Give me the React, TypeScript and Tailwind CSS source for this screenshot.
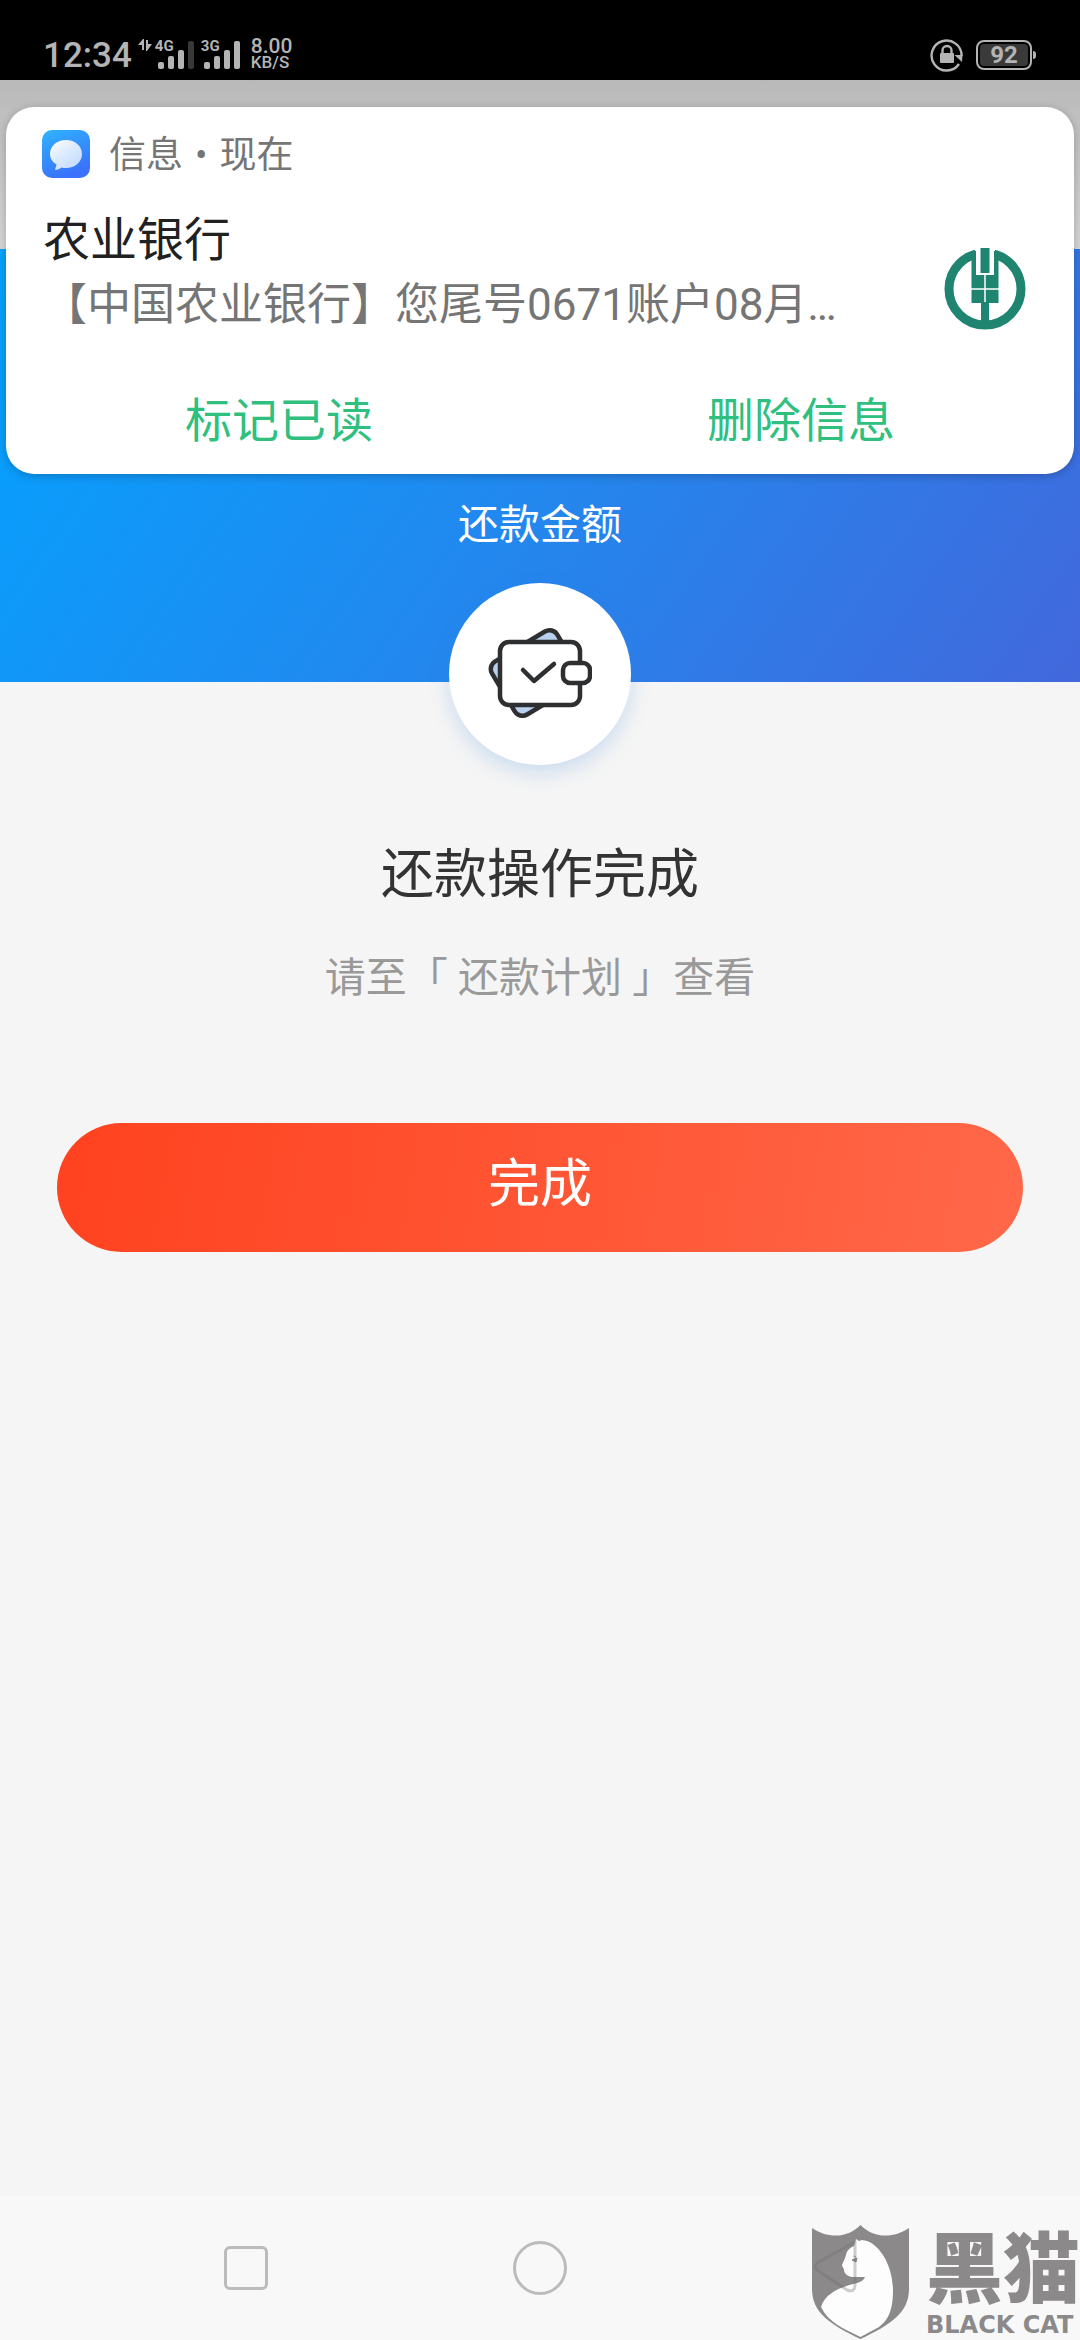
function SignalBars({ label, dim }: { label: string; dim?: boolean }) {
  return (
    <span className="relative block h-8 w-[38px]">
      <svg viewBox="0 0 38 32" className="block h-full w-full" fill="#b4b4b4">
        <rect x="1" y="25" width="6" height="7" rx="2" />
        <rect x="11" y="19" width="6" height="13" rx="2" />
        <rect x="21" y="13" width="6" height="19" rx="2" />
        <rect x="31" y="4" width="6" height="28" rx="2" fill={dim ? "#383838" : "#b4b4b4"} />
      </svg>
      <span className="absolute top-0 -left-0.5 text-[15px] leading-[18px] font-bold">{label}</span>
    </span>
  );
}

function StatusBar() {
  return (
    <header className="flex h-20 shrink-0 items-end justify-between bg-black pr-11 pl-[43px] text-[#b4b4b4]">
      <div className="flex items-end pb-[11px]">
        <span className="text-[35px] leading-[26px] font-medium">12:34</span>
        <svg viewBox="0 0 14 12" className="mb-[18px] ml-1.5 h-3 w-3.5" fill="#b4b4b4">
          <path d="M0 6 5 0h1v11H4V6zM8 1h2v4h4l-5 7H8z" />
        </svg>
        <span className="ml-[5px]"><SignalBars label="4G" dim /></span>
        <span className="ml-2"><SignalBars label="3G" /></span>
        <span className="ml-2.5 flex flex-col">
          <span className="text-[21px] leading-[18px] font-medium">8.00</span>
          <span className="text-[17px] leading-[14px] font-medium">KB/S</span>
        </span>
      </div>
      <div className="flex items-center gap-3 pb-2">
        <svg viewBox="0 0 34 34" className="h-[34px] w-[34px]" fill="none" stroke="#b4b4b4" strokeWidth="2.4">
          <path d="M29 26A15 15 0 1 1 31.600 18" />
          <path d="M24.500 17h8l-.5 7z" fill="#b4b4b4" stroke="none" />
          <rect x="10" y="15" width="14" height="10" rx="1" fill="#b4b4b4" stroke="none" />
          <path d="M12.500 16v-3.500a4.500 4.500 0 0 1 9 0V16" />
        </svg>
        <span className="flex items-center">
          <span className="flex h-[30px] w-14 rounded-lg border-2 border-[#b4b4b4] p-0.5">
            <span className="flex flex-1 items-center justify-center rounded bg-[#3a3a3a] text-2xl leading-6 font-bold">92</span>
          </span>
          <span className="ml-px h-2 w-[3px] rounded-r bg-[#b4b4b4]" />
        </span>
      </div>
    </header>
  );
}

function MessageIcon() {
  return (
    <svg viewBox="0 0 48 48" className="size-12">
      <defs>
        <linearGradient id="msg-bg" x1="0" y1="0" x2="0.4" y2="1">
          <stop offset="0" stopColor="#2fb4ff" />
          <stop offset="1" stopColor="#3a72fb" />
        </linearGradient>
        <linearGradient id="msg-bubble" x1="0" y1="0" x2="0.8" y2="1">
          <stop offset="0" stopColor="#ffffff" />
          <stop offset="0.5" stopColor="#dceafe" />
          <stop offset="1" stopColor="#c3dbff" />
        </linearGradient>
      </defs>
      <rect width="48" height="48" rx="10" fill="url(#msg-bg)" />
      <path d="M24 10c9 0 16 6 16 14s-7 14-16 14c-2 0-3 0-4.500-.5-2 1.500-4 2.200-6.500 2.500l1.500-5.500C10.500 32 8 28.500 8 24c0-8 7-14 16-14z" fill="url(#msg-bubble)" />
    </svg>
  );
}

function BankLogo() {
  return (
    <svg viewBox="0 0 82 82" className="mt-[33px] size-[82px] shrink-0">
      <circle cx="41" cy="41" r="36" fill="none" stroke="#1f8470" strokeWidth="9" />
      <path d="M31 0h20v27H31z" fill="#fff" />
      <path d="M27.500 3h4.500v24h18V3h4.500v52H45v20h-8V55h-9.500z" fill="#1f8470" />
      <path d="M36.500 0h9v25h-9z" fill="#1f8470" />
      <path d="M41 27v27M27 41h28" stroke="#fff" strokeWidth="1.500" fill="none" />
    </svg>
  );
}

function Notification() {
  return (
    <section className="absolute inset-x-1.5 top-[107px] z-10 rounded-[28px] bg-white px-3 pt-[18px] pb-[18px] shadow-[0_2px_10px_rgba(0,0,0,0.22)]">
      <div className="flex items-center px-6 text-[37px] leading-[54px] text-[#757575]">
        <MessageIcon />
        <div className="ml-[19px] flex gap-3 pt-1">
          <span>信息</span>
          <span>•</span>
          <span>现在</span>
        </div>
      </div>
      <div className="flex items-center justify-between pt-6 pr-9 pl-[25px]">
        <div>
          <h2 className="text-[47px] leading-[66px] text-[#212121]">农业银行</h2>
          <p className="text-[44px] leading-[64px] text-[#757575]">【中国农业银行】您尾号0671账户08月…</p>
        </div>
        <BankLogo />
      </div>
      <div className="grid grid-cols-2 pt-[49px] text-[47px] leading-[70px] text-[#2fbf7f]">
        <button type="button">标记已读</button>
        <button type="button">删除信息</button>
      </div>
    </section>
  );
}

function WalletBadge() {
  return (
    <div className="absolute top-full left-1/2 flex size-[182px] -translate-x-1/2 -translate-y-[99px] items-center justify-center rounded-full bg-white shadow-[0_8px_20px_rgba(60,130,220,0.22)]">
      <svg viewBox="0 0 104 94" className="h-[94px] w-[104px]" stroke="#2e2f31" strokeWidth="4.500" strokeLinecap="round" strokeLinejoin="round">
        <rect x="10" y="15" width="76" height="62" rx="9" transform="rotate(-31 48 46)" fill="#b9d0ee" />
        <rect x="12" y="15" width="80" height="63" rx="9" fill="#fff" />
        <rect x="75" y="36" width="27" height="20" rx="7" fill="#fff" />
        <path d="M35 43 46 54 66 37" fill="none" />
      </svg>
    </div>
  );
}

function BlackCatMark() {
  return (
    <div className="pointer-events-none absolute right-0 bottom-0 flex items-end gap-[17px] text-[#8b8989]">
      <svg viewBox="0 0 97 115" className="h-[115px] w-[97px]">
        <path d="M0 3c16 11 36 10 48.500-3C61 13 81 14 97 3v61c0 24-19 36-48.500 50C19 100 0 88 0 64z" fill="#8b8989" />
        <path d="M9 82c5-16 24-21 36-24 4-1 7-3 8-6H40c-5-1-8-4-8-7 0-2-2-3-2-5 1-3 3-6 4-10 1-5 4-7 8-9l2-7 3 2 3-1C66 16 81 39 81 66c0 21-6 30-14 36l-18.500 10C32 104 16 97 9 82z" fill="#fdfdfd" />
        <path d="M40 35l5-2-1 4zM42 31l2 1" fill="#8b8989" stroke="#8b8989" />
        <path d="M43 17 5 38q-4 4 0 7l30 20q8 3 8-5z" fill="none" stroke="#6f6f6f" strokeOpacity="0.35" strokeWidth="3" />
      </svg>
      <div className="flex flex-col">
        <span className="text-[77px] leading-[78px] font-black">黑猫</span>
        <span className="font-['DejaVu_Sans',sans-serif] text-2xl leading-[30px] font-bold whitespace-nowrap">BLACK CAT</span>
      </div>
    </div>
  );
}

function NavBar() {
  return (
    <nav className="relative grid h-36 shrink-0 grid-cols-3 bg-[#f8f8f8] px-[99px]">
      <button type="button" aria-label="最近任务" className="flex items-center justify-center">
        <span className="size-11 rounded-md border-3 border-[#bbbbbb]" />
      </button>
      <button type="button" aria-label="主屏幕" className="flex items-center justify-center">
        <span className="size-[54px] rounded-full border-3 border-[#bbbbbb]" />
      </button>
      <button type="button" aria-label="返回" />
      <BlackCatMark />
    </nav>
  );
}

export default function App() {
  return (
    <div className="relative flex min-h-screen flex-col bg-[#f5f5f5] font-[Roboto,'Noto_Sans_CJK_SC',sans-serif]">
      <StatusBar />
      <div className="h-[169px] shrink-0 bg-linear-to-b from-[#b9b9b9] to-[#d6d6d6]" />
      <Notification />
      <section className="relative flex h-[433px] shrink-0 flex-col items-center bg-[linear-gradient(125deg,#03a3ff_0%,#2387ee_52%,#4268dc_100%)] pt-[246px]">
        <p className="text-[41px] leading-[60px] text-white">还款金额</p>
        <WalletBadge />
      </section>
      <main className="flex flex-1 flex-col items-center px-[57px] pt-[154px]">
        <h1 className="text-[53px] leading-[78px] text-[#333333]">还款操作完成</h1>
        <p className="mt-[34px] text-[41px] leading-[60px] text-[#999999]">请至「 还款计划 」查看</p>
        <button type="button" className="mt-[115px] flex h-[129px] w-full items-center justify-center rounded-full bg-[linear-gradient(100deg,#ff421f,#ff6849)] pb-1.5 text-[52px] text-white">
          完成
        </button>
      </main>
      <NavBar />
    </div>
  );
}
